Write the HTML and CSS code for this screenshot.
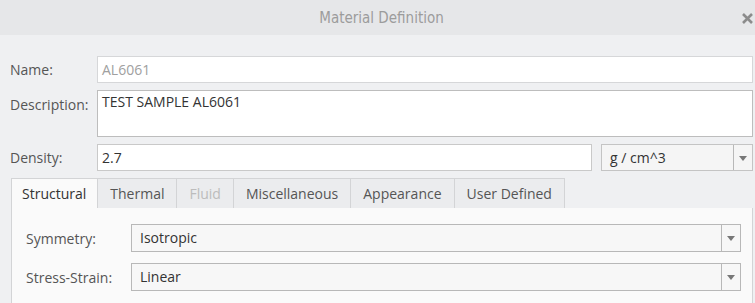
FILE: index.html
```html
<!DOCTYPE html>
<html lang="en">
<head>
    <meta charset="UTF-8">
    <title>Material Definition</title>
    <link rel="stylesheet" href="styles.css">
</head>
<body>
    <div class="titlebar">
        Material Definition
        <svg class="close-btn" width="11" height="11" viewBox="0 0 11 11">
            <path d="M1 1 L10 10 M10 1 L1 10" stroke="#8c8c8c" stroke-width="2.6" fill="none"/>
        </svg>
    </div>

    <div class="form">
        <!-- basic fields -->
        <div class="field-row">
            <label class="field-label">Name:</label>
            <div class="text-box disabled">AL6061</div>
        </div>
        <div class="field-row">
            <label class="field-label top">Description:</label>
            <div class="text-box multi">TEST SAMPLE AL6061</div>
        </div>
        <div class="field-row">
            <label class="field-label">Density:</label>
            <div class="density-group">
                <div class="text-box">2.7</div>
                <div class="combo unit">
                    <span class="combo-value">g / cm^3</span>
                    <span class="combo-arrow"></span>
                </div>
            </div>
        </div>

        <!-- tabs -->
        <div class="tabs">
            <div class="tab active">Structural</div>
            <div class="tab">Thermal</div>
            <div class="tab disabled">Fluid</div>
            <div class="tab">Miscellaneous</div>
            <div class="tab">Appearance</div>
            <div class="tab">User Defined</div>
        </div>
        <div class="tab-panel">
            <div class="panel-row">
                <label class="panel-label">Symmetry:</label>
                <div class="combo">
                    <span class="combo-value">Isotropic</span>
                    <span class="combo-arrow"></span>
                </div>
            </div>
            <div class="panel-row">
                <label class="panel-label">Stress-Strain:</label>
                <div class="combo">
                    <span class="combo-value">Linear</span>
                    <span class="combo-arrow"></span>
                </div>
            </div>
        </div>
    </div>
</body>
</html>
```

FILE: styles.css
```css
* {
    margin: 0;
    padding: 0;
    box-sizing: border-box;
}

body {
    font-family: 'Open Sans', 'Noto Sans', Arial, sans-serif;
    font-size: 14px;
    background-color: #eff0f2;
    color: #444;
    overflow: hidden;
}

.titlebar {
    position: relative;
    height: 35px;
    line-height: 37px;
    padding-left: 8px;
    background-color: #e6e7e9;
    text-align: center;
    color: #9c9c9c;
    font-family: 'DejaVu Sans Condensed', 'Open Sans', sans-serif;
    font-size: 15px;
}

.close-btn {
    position: absolute;
    right: 2px;
    top: 13px;
}

.form {
    padding: 21px 2px 0 10px;
}

.field-row {
    display: flex;
    margin-bottom: 7px;
}

.field-label {
    width: 87px;
    flex-shrink: 0;
    display: flex;
    align-items: center;
    color: #555;
}

.field-label.top {
    align-items: flex-start;
    padding-top: 5px;
}

.text-box {
    flex: 1;
    height: 27px;
    line-height: 25px;
    padding: 0 4px;
    background: white;
    border: 1px solid #c9c9c9;
    color: #333;
}

.text-box.disabled {
    border-color: #d6d7d9;
    color: #a0a0a0;
}

.text-box.multi {
    height: 47px;
    line-height: 19px;
    padding-top: 1px;
    border-color: #bdbdbd;
}

.density-group {
    flex: 1;
    display: flex;
    gap: 9px;
}

.combo {
    flex: 1;
    display: flex;
    height: 28px;
    background: #f7f7f7;
    border: 1px solid #b8b8b8;
    color: #333;
}

.combo.unit {
    flex: 0 0 152px;
    height: 27px;
    background: #f5f5f5;
    border-color: #c4c4c4;
}

.combo-value {
    flex: 1;
    padding-left: 8px;
    line-height: 25px;
}

.combo-arrow {
    width: 19px;
    border-left: 1px solid #b8b8b8;
    position: relative;
}

.combo-arrow::after {
    content: '';
    position: absolute;
    left: 5px;
    top: 11px;
    border-left: 4px solid transparent;
    border-right: 4px solid transparent;
    border-top: 5px solid #777;
}

.tabs {
    display: flex;
    margin-left: 1px;
    height: 30px;
}

.tab {
    padding: 0 12px;
    line-height: 29px;
    background: #ebecee;
    border: 1px solid #d3d4d6;
    border-left: none;
    border-bottom: none;
    color: #555;
}

.tab.active {
    background: #fafafa;
    border-left: 1px solid #d3d4d6;
    color: #333;
    padding: 0 11px 0 10px;
}

.tab.disabled {
    color: #bcbcbc;
}

.tab-panel {
    margin-left: 1px;
    background: #fafafa;
    border: 1px solid #d3d4d6;
    border-top: none;
    height: 100px;
    padding: 16px 11px 0 14px;
}

.panel-row {
    display: flex;
    margin-bottom: 11px;
}

.panel-label {
    width: 105px;
    flex-shrink: 0;
    display: flex;
    align-items: center;
    color: #555;
}
```
